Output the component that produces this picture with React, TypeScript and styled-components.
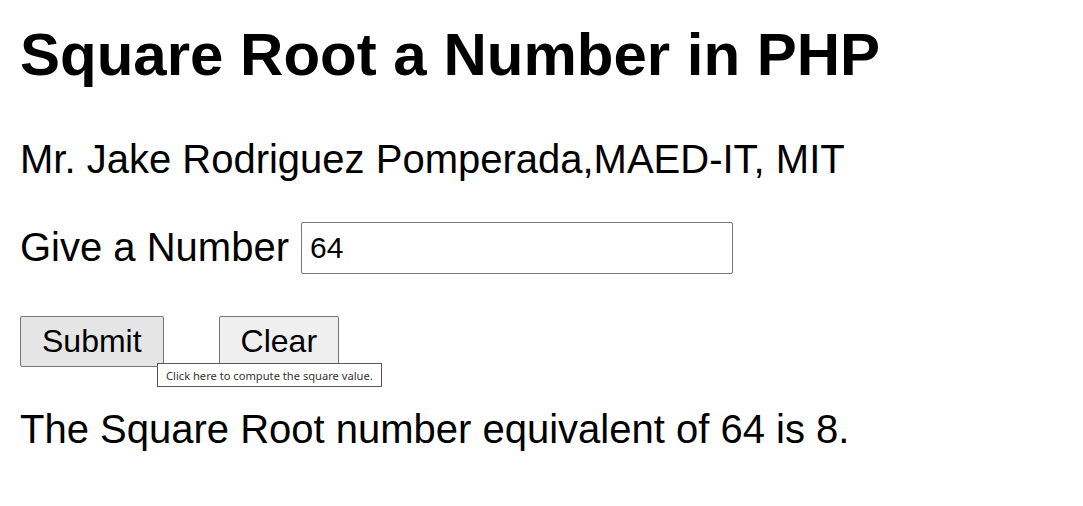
import React from "react";
import styled, { createGlobalStyle } from "styled-components";

const Global = createGlobalStyle`
  html, body { margin: 0; padding: 0; background: #ffffff; }
  body { font-family: "Liberation Sans", Arial, sans-serif; color: #000; }
`;

const Page = styled.div`
  display: flex;
  flex-direction: column;
  align-items: flex-start;
  padding: 20px 0 0 20px;
`;

const Title = styled.h1`
  margin: 0;
  font-size: 60px;
  font-weight: bold;
  line-height: normal;
`;

const Text = styled.p<{ $mt: number }>`
  margin: ${(p) => p.$mt}px 0 0 0;
  font-size: 40px;
  line-height: normal;
`;

const Row = styled.div<{ $mt: number }>`
  position: relative;
  display: flex;
  align-items: center;
  margin-top: ${(p) => p.$mt}px;
`;

const Label = styled.span`
  font-size: 40px;
  line-height: normal;
  margin-right: 12px;
  margin-bottom: 2px;
`;

const Input = styled.input`
  box-sizing: border-box;
  width: 432px;
  height: 52px;
  padding: 0 8px;
  border: 1px solid #767676;
  border-radius: 2px;
  font-family: "Liberation Sans", Arial, sans-serif;
  font-size: 30px;
  color: #000;
  background: #fff;
  outline: none;
`;

const Button = styled.button<{ $hover?: boolean }>`
  box-sizing: border-box;
  height: 51px;
  padding: 0 21px;
  border: 1px solid #767676;
  border-radius: 2px;
  background: ${(p) => (p.$hover ? "#e5e5e5" : "#efefef")};
  font-family: "Liberation Sans", Arial, sans-serif;
  font-size: 32px;
  line-height: normal;
  color: #000;
`;

const Buttons = styled(Row)`
  gap: 55px;
`;

const Tooltip = styled.div`
  position: absolute;
  left: 137px;
  top: 47px;
  height: 24px;
  box-sizing: border-box;
  display: flex;
  align-items: center;
  padding: 0 8px;
  border: 1px solid #575757;
  background: #ffffff;
  color: #333333;
  font-family: "Noto Sans", "Open Sans", sans-serif;
  font-size: 11.15px;
  white-space: nowrap;
`;

export default function App() {
  return (
    <>
      <Global />
      <Page>
        <Title>Square Root a Number in PHP</Title>
        <Text $mt={48}>Mr. Jake Rodriguez Pomperada,MAED-IT, MIT</Text>
        <Row $mt={40}>
          <Label>Give a Number</Label>
          <Input defaultValue="64" />
        </Row>
        <Buttons $mt={42}>
          <Button $hover>Submit</Button>
          <Button>Clear</Button>
          <Tooltip>Click here to compute the square value.</Tooltip>
        </Buttons>
        <Text $mt={40}>The Square Root number equivalent of 64 is 8.</Text>
      </Page>
    </>
  );
}
